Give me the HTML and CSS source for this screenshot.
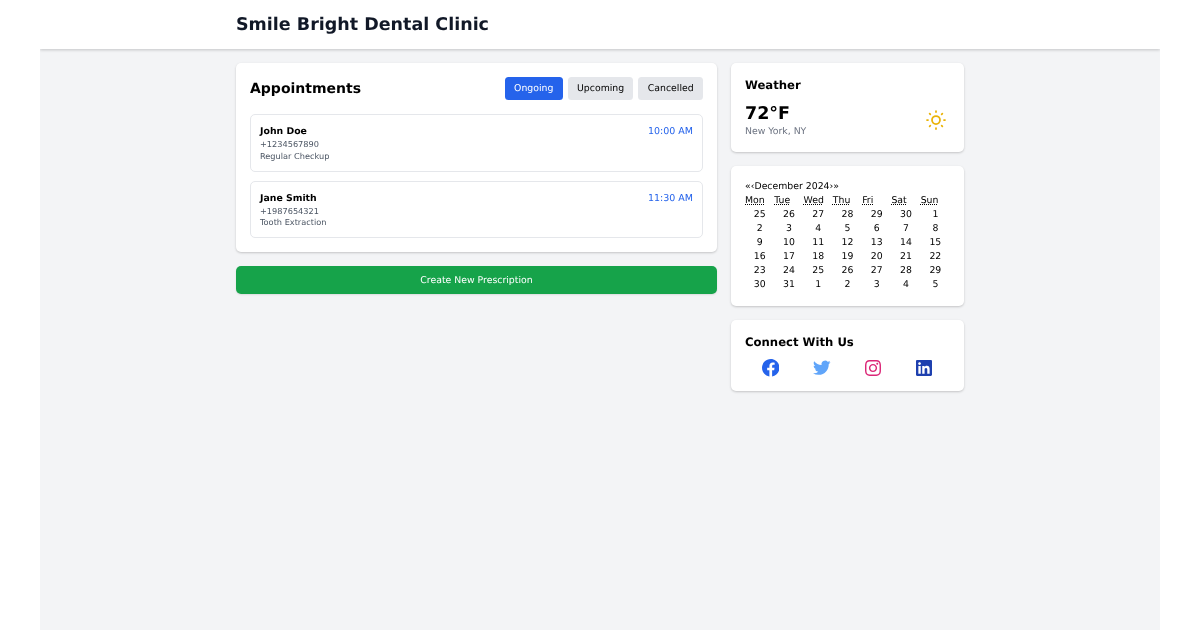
FILE: index.html
```html
<!DOCTYPE html>
<html lang="en">
<head>
<meta charset="utf-8">
<title>Smile Bright Dental Clinic</title>
<link rel="stylesheet" href="styles.css">
</head>
<body>
<div class="app">
  <header class="header"><div class="wrap"><h1 class="brand">Smile Bright Dental Clinic</h1></div></header>
  <main class="wrap columns">
    <section class="left">
      <div class="card">
        <div class="appt-head">
          <h2 class="appt-title">Appointments</h2>
          <div class="tabs">
            <button class="tab tab-active">Ongoing</button>
            <button class="tab">Upcoming</button>
            <button class="tab">Cancelled</button>
          </div>
        </div>
        <div class="appt-list">
          <article class="appt">
            <div><div class="name">John Doe</div><div class="phone">+1234567890</div><div class="reason">Regular Checkup</div></div>
            <div class="time">10:00 AM</div>
          </article>
          <article class="appt">
            <div><div class="name">Jane Smith</div><div class="phone">+1987654321</div><div class="reason">Tooth Extraction</div></div>
            <div class="time">11:30 AM</div>
          </article>
        </div>
      </div>
      <button class="create">Create New Prescription</button>
    </section>
    <aside class="right">
      <div class="card">
        <h3 class="side-title side-title-weather">Weather</h3>
        <div class="weather">
          <div><div class="temp">72°F</div><div class="place">New York, NY</div></div>
          <svg class="sun" viewBox="0 0 24 24" fill="none" stroke="#eab308" stroke-width="1.75" stroke-linecap="round" stroke-linejoin="round"><path d="M12 3v1m0 16v1m9-9h-1M4 12H3m15.364 6.364l-.707-.707M6.343 6.343l-.707-.707m12.728 0l-.707.707M6.343 17.657l-.707.707M16 12a4 4 0 11-8 0 4 4 0 018 0z"/></svg>
        </div>
      </div>
      <div class="card cal">
        <div class="cal-nav"><span>«</span><span>‹</span><span>December 2024</span><span>›</span><span>»</span></div>
        <table class="cal-table">
          <thead><tr><th><abbr title="Monday">Mon</abbr></th><th><abbr title="Tuesday">Tue</abbr></th><th><abbr title="Wednesday">Wed</abbr></th><th><abbr title="Thursday">Thu</abbr></th><th><abbr title="Friday">Fri</abbr></th><th><abbr title="Saturday">Sat</abbr></th><th><abbr title="Sunday">Sun</abbr></th></tr></thead>
          <tbody>
            <tr><td>25</td><td>26</td><td>27</td><td>28</td><td>29</td><td>30</td><td>1</td></tr>
            <tr><td>2</td><td>3</td><td>4</td><td>5</td><td>6</td><td>7</td><td>8</td></tr>
            <tr><td>9</td><td>10</td><td>11</td><td>12</td><td>13</td><td>14</td><td>15</td></tr>
            <tr><td>16</td><td>17</td><td>18</td><td>19</td><td>20</td><td>21</td><td>22</td></tr>
            <tr><td>23</td><td>24</td><td>25</td><td>26</td><td>27</td><td>28</td><td>29</td></tr>
            <tr><td>30</td><td>31</td><td>1</td><td>2</td><td>3</td><td>4</td><td>5</td></tr>
          </tbody>
        </table>
      </div>
      <div class="card">
        <h3 class="side-title">Connect With Us</h3>
        <div class="social">
          <svg class="ico ico-fb" viewBox="0 0 24 24"><path d="M24 12.073c0-6.627-5.373-12-12-12s-12 5.373-12 12c0 5.99 4.388 10.954 10.125 11.854v-8.385H7.078v-3.47h3.047V9.43c0-3.007 1.792-4.669 4.533-4.669 1.312 0 2.686.235 2.686.235v2.953H15.83c-1.491 0-1.956.925-1.956 1.874v2.25h3.328l-.532 3.47h-2.796v8.385C19.612 23.027 24 18.062 24 12.073z"/></svg>
          <svg class="ico ico-tw" viewBox="0 0 24 24"><path d="M23.953 4.57a10 10 0 01-2.825.775 4.958 4.958 0 002.163-2.723c-.951.555-2.005.959-3.127 1.184a4.92 4.92 0 00-8.384 4.482C7.69 8.095 4.067 6.13 1.64 3.162a4.822 4.822 0 00-.666 2.475c0 1.71.87 3.213 2.188 4.096a4.904 4.904 0 01-2.228-.616v.06a4.923 4.923 0 003.946 4.827 4.996 4.996 0 01-2.212.085 4.936 4.936 0 004.604 3.417 9.867 9.867 0 01-6.102 2.105c-.39 0-.779-.023-1.17-.067a13.995 13.995 0 007.557 2.209c9.053 0 13.998-7.496 13.998-13.985 0-.21 0-.42-.015-.63A9.935 9.935 0 0024 4.59z"/></svg>
          <svg class="ico ico-ig" viewBox="0 0 24 24"><path d="M12 2.163c3.204 0 3.584.012 4.85.07 3.252.148 4.771 1.691 4.919 4.919.058 1.265.069 1.645.069 4.849 0 3.205-.012 3.584-.069 4.849-.149 3.225-1.664 4.771-4.919 4.919-1.266.058-1.644.07-4.85.07-3.204 0-3.584-.012-4.849-.07-3.26-.149-4.771-1.699-4.919-4.92-.058-1.265-.07-1.644-.07-4.849 0-3.204.013-3.583.07-4.849.149-3.227 1.664-4.771 4.919-4.919 1.266-.057 1.645-.069 4.849-.069zm0-2.163c-3.259 0-3.667.014-4.947.072-4.358.2-6.78 2.618-6.98 6.98-.059 1.281-.073 1.689-.073 4.948 0 3.259.014 3.668.072 4.948.2 4.358 2.618 6.78 6.98 6.98 1.281.058 1.689.072 4.948.072 3.259 0 3.668-.014 4.948-.072 4.354-.2 6.782-2.618 6.979-6.98.059-1.28.073-1.689.073-4.948 0-3.259-.014-3.667-.072-4.947-.196-4.354-2.617-6.78-6.979-6.98-1.281-.059-1.69-.073-4.949-.073zm0 5.838c-3.403 0-6.162 2.759-6.162 6.162s2.759 6.163 6.162 6.163 6.162-2.759 6.162-6.163c0-3.403-2.759-6.162-6.162-6.162zm0 10.162c-2.209 0-4-1.79-4-4 0-2.209 1.791-4 4-4s4 1.791 4 4c0 2.21-1.791 4-4 4zm6.406-11.845c-.796 0-1.441.645-1.441 1.44s.645 1.44 1.441 1.44c.795 0 1.439-.645 1.439-1.44s-.644-1.44-1.439-1.44z"/></svg>
          <svg class="ico ico-li" viewBox="0 0 24 24"><path d="M20.447 20.452h-3.554v-5.569c0-1.328-.027-3.037-1.852-3.037-1.853 0-2.136 1.445-2.136 2.939v5.667H9.351V9h3.414v1.561h.046c.477-.9 1.637-1.85 3.37-1.85 3.601 0 4.267 2.37 4.267 5.455v6.286zM5.337 7.433c-1.144 0-2.063-.926-2.063-2.065 0-1.138.92-2.063 2.063-2.063 1.14 0 2.064.925 2.064 2.063 0 1.139-.925 2.065-2.064 2.065zm1.782 13.019H3.555V9h3.564v11.452zM22.225 0H1.771C.792 0 0 .774 0 1.729v20.542C0 23.227.792 24 1.771 24h20.451C23.2 24 24 23.227 24 22.271V1.729C24 .774 23.2 0 22.222 0h.003z"/></svg>
        </div>
      </div>
    </aside>
  </main>
</div>
</body>
</html>
```

FILE: styles.css
```css
* { box-sizing: border-box; margin: 0; padding: 0; }
html, body { height: 100%; background: #fff; }
body { font-family: "DejaVu Sans", sans-serif; color: #000; overflow: hidden; text-rendering: geometricPrecision; }
.app { width: 1120px; height: 630px; margin: 0 auto; background: #f3f4f6; overflow: hidden; filter: blur(.3px); }
.wrap { width: 728px; margin: 0 auto; }
.header { height: 49px; padding-top: 1px; background: #fff; box-shadow: 0 1px 3px rgba(0,0,0,.2); display: flex; align-items: center; }
.brand { font-size: 17.5px; line-height: 24px; font-weight: 700; color: #111827; }
.columns { display: flex; gap: 14px; padding-top: 14px; align-items: flex-start; }
.left { width: 481px; display: flex; flex-direction: column; gap: 14px; }
.right { width: 233px; display: flex; flex-direction: column; gap: 14px; }
.card { background: #fff; border-radius: 5px; padding: 14px; box-shadow: 0 1px 3px rgba(0,0,0,.1), 0 1px 2px rgba(0,0,0,.1); }
.appt-head { display: flex; justify-content: space-between; align-items: center; margin-bottom: 14px; }
.appt-title { font-size: 14px; line-height: 20px; padding-top: 1px; font-weight: 700; }
.tabs { display: flex; gap: 5px; }
.tab { height: 23px; padding: 1px 9.33px 0; border: 0; border-radius: 3.5px; background: #e5e7eb; color: #000; font: 400 9.33px/14px "DejaVu Sans", sans-serif; text-rendering: geometricPrecision; }
.tab-active { background: #2563eb; color: #fff; }
.appt-list { display: flex; flex-direction: column; gap: 9px; }
.appt { display: flex; justify-content: space-between; align-items: flex-start; padding: 10px 9px 8.5px; border: 1px solid #e5e7eb; border-radius: 5px; }
.name { font-size: 9.33px; line-height: 14px; font-weight: 700; }
.phone { font-size: 8.2px; line-height: 11.5px; color: #4b5563; }
.reason { font-size: 8.2px; line-height: 11.5px; color: #4b5563; }
.time { font-size: 9.5px; line-height: 14px; color: #2563eb; }
.create { height: 28px; padding-top: 1px; border: 0; border-radius: 5px; background: #16a34a; color: #fff; font: 400 9.33px/14px "DejaVu Sans", sans-serif; text-rendering: geometricPrecision; box-shadow: 0 1px 2px rgba(0,0,0,.1); }
.side-title { font-size: 11.67px; line-height: 16px; font-weight: 700; margin-bottom: 9px; }
.side-title-weather { margin-bottom: 11px; }
.weather { display: flex; justify-content: space-between; align-items: center; }
.temp { font-size: 17.5px; line-height: 21px; font-weight: 700; }
.place { font-size: 9.33px; line-height: 13px; color: #6b7280; }
.sun { width: 24px; height: 24px; margin: 0 2px 3px 0; display: block; }
.cal-nav { display: flex; font-size: 9.33px; line-height: 14px; }
.cal-table { width: 205px; table-layout: fixed; border-collapse: collapse; font-size: 9.33px; }
.cal-table th { font-weight: 400; text-align: left; height: 14px; line-height: 13px; padding: 0 0 1px; }
.cal-table td { text-align: center; height: 14px; line-height: 14px; padding: 0; }
.cal-table abbr { text-decoration: underline dotted; }
.social { display: grid; grid-template-columns: repeat(4, 1fr); justify-items: center; align-items: center; }
.ico { width: 17.5px; height: 17.5px; display: block; fill: currentColor; }
.ico-fb { color: #2563eb; }
.ico-tw { color: #60a5fa; }
.ico-ig { color: #db2777; width: 16px; height: 16px; }
.ico-li { color: #1e40af; width: 16px; height: 16px; }
```
